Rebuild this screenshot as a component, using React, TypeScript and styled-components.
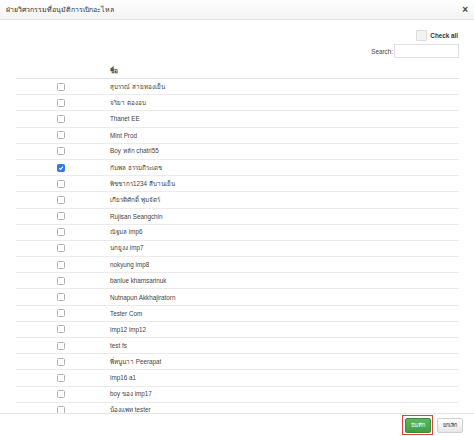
import React from "react";
import styled, { createGlobalStyle } from "styled-components";

const GlobalStyle = createGlobalStyle`
  html, body {
    margin: 0;
    padding: 0;
    background: #ffffff;
  }
  body {
    font-family: "Liberation Sans", "Noto Sans", sans-serif;
    color: #333333;
  }
`;

const names = [
  "สุบรรณ์ สายทองเย็น",
  "จริยา ตองอบ",
  "Thanet EE",
  "Mint Prod",
  "Boy หลัก chatri55",
  "กัมพล ธรรมถีระเดช",
  "พิชชากร1234 สีบานเย็น",
  "เกียรติศักดิ์ พุ่มจัตร์",
  "Rujisan Seangchin",
  "ณัฐมล imp6",
  "นกยูงง imp7",
  "nokyung imp8",
  "banlue khamsarinuk",
  "Nutnapun Akkhajiratorn",
  "Tester Com",
  "imp12 imp12",
  "test fs",
  "พี่หนูนาา Peerapat",
  "imp16 a1",
  "boy ของ imp17",
  "น้องแพท tester",
];

const checkedIndex = 5;

export default function App() {
  return (
    <>
      <GlobalStyle />
      <Modal>
        <Header>
          <Title>ฝ่ายวิศวกรรมที่อนุมัติการเบิกอะไหล</Title>
          <Close>×</Close>
        </Header>
        <Body>
          <CheckAllRow>
            <BigCheck />
            <CheckAllLabel>Check all</CheckAllLabel>
          </CheckAllRow>
          <SearchRow>
            <SearchLabel>Search:</SearchLabel>
            <SearchInput />
          </SearchRow>
          <Table>
            <thead>
              <tr>
                <HeadCell />
                <HeadCell>ชื่อ</HeadCell>
                <HeadCell />
              </tr>
            </thead>
            <tbody>
              {names.map((n, i) => (
                <Row key={n}>
                  <CheckCell>
                    <SmallCheck $checked={i === checkedIndex}>
                      {i === checkedIndex && (
                        <svg width="6" height="6" viewBox="0 0 10 10">
                          <path d="M2 5.2 L4.2 7.4 L8.2 2.6" fill="none" stroke="#fff" strokeWidth="1.8" />
                        </svg>
                      )}
                    </SmallCheck>
                  </CheckCell>
                  <NameCell>{n}</NameCell>
                  <Cell />
                </Row>
              ))}
            </tbody>
          </Table>
        </Body>
        <Footer>
          <SaveWrap>
            <Button $primary>บันทึก</Button>
          </SaveWrap>
          <Button>ยกเลิก</Button>
        </Footer>
      </Modal>
    </>
  );
}

const Modal = styled.div`
  width: 474px;
  height: 436px;
  display: flex;
  flex-direction: column;
  background: #fff;
  overflow: hidden;
`;

const Header = styled.div`
  height: 20px;
  flex: none;
  display: flex;
  align-items: center;
  justify-content: space-between;
  padding: 0 6px 0 6px;
  background: linear-gradient(#ffffff, #f3f3f3);
  border-bottom: 1px solid #e2e2e2;
  box-sizing: border-box;
`;

const Title = styled.div`
  font-size: 7px;
  color: #333;
`;

const Close = styled.div`
  font-size: 10px;
  font-weight: bold;
  color: #444;
  line-height: 1;
`;

const Body = styled.div`
  flex: 1;
  overflow: hidden;
  padding: 10px 15px 0 16px;
  display: flex;
  flex-direction: column;
`;

const CheckAllRow = styled.div`
  display: flex;
  justify-content: flex-end;
  align-items: center;
  gap: 3px;
  height: 11px;
  padding-right: 1px;
`;

const BigCheck = styled.span`
  width: 9px;
  height: 9px;
  border: 1px solid #dcdcdc;
  background: #f3f3f3;
  border-radius: 1px;
`;

const CheckAllLabel = styled.span`
  font-size: 6.3px;
  font-weight: bold;
  color: #333;
`;

const SearchRow = styled.div`
  display: flex;
  justify-content: flex-end;
  align-items: center;
  margin-top: 3px;
`;

const SearchLabel = styled.span`
  font-size: 6.3px;
  color: #444;
`;

const SearchInput = styled.div`
  width: 65px;
  height: 14px;
  border: 1px solid #e0e0e0;
  box-sizing: border-box;
  margin-left: 1px;
`;

const Table = styled.table`
  margin-top: 5px;
  width: 100%;
  border-collapse: collapse;
  font-size: 6.3px;
  color: #444;
`;

const HeadCell = styled.th`
  height: 15px;
  text-align: left;
  font-weight: bold;
  font-size: 6.5px;
  border-bottom: 1.5px solid #e4e4e4;
  padding: 0;
  &:first-child {
    width: 94px;
  }
  &:nth-child(2) {
    width: 190px;
  }
`;

const Row = styled.tr`
  height: 16.2px;
  border-bottom: 1px solid #ebebeb;
`;

const Cell = styled.td`
  padding: 0;
`;

const CheckCell = styled(Cell)`
  padding-left: 41px;
  vertical-align: middle;
`;

const NameCell = styled(Cell)`
  vertical-align: middle;
`;

const SmallCheck = styled.span<{ $checked?: boolean }>`
  display: flex;
  align-items: center;
  justify-content: center;
  width: 6px;
  height: 6px;
  border: 1px solid ${(p) => (p.$checked ? "#2f7be6" : "#b0b0b0")};
  background: ${(p) => (p.$checked ? "#2f7be6" : "#fff")};
  border-radius: 1.5px;
`;

const Footer = styled.div`
  flex: none;
  height: 23px;
  border-top: 1px solid #e5e5e5;
  display: flex;
  justify-content: flex-end;
  align-items: center;
  gap: 4px;
  padding-right: 11px;
  box-sizing: border-box;
`;

const SaveWrap = styled.div`
  border: 1.5px solid #d9443f;
  padding: 1.5px;
  display: flex;
`;

const Button = styled.div<{ $primary?: boolean }>`
  height: 15px;
  display: flex;
  align-items: center;
  padding: 0 5px;
  font-size: 5.5px;
  border-radius: 2px;
  box-sizing: border-box;
  color: ${(p) => (p.$primary ? "#fff" : "#333")};
  background: ${(p) => (p.$primary ? "linear-gradient(#5cb85c, #449d44)" : "linear-gradient(#ffffff, #e6e6e6)")};
  border: 1px solid ${(p) => (p.$primary ? "#3d8b3d" : "#cfcfcf")};
`;
